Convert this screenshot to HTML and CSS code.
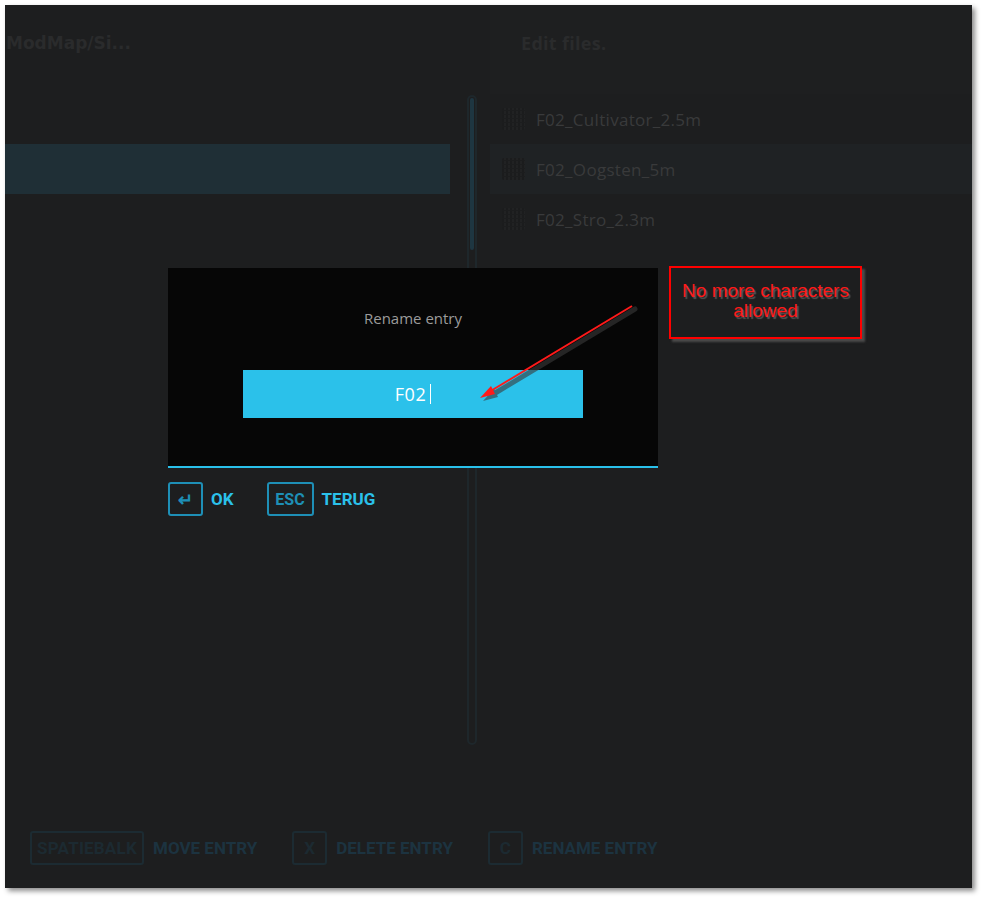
FILE: index.html
```html
<!DOCTYPE html>
<html>
<head>
<meta charset="utf-8">
<link rel="stylesheet" href="styles.css">
</head>
<body>
<div class="window">
  <div class="main">
    <div class="col-left">
      <div class="head head-left">ModMap/Si...</div>
      <div class="row"></div>
      <div class="row row-sel-left"></div>
    </div>
    <div class="col-scroll">
      <div class="track"><div class="thumb"></div></div>
    </div>
    <div class="col-right">
      <div class="head head-right">Edit files.</div>
      <div class="row frow"><span class="ficon"></span><span class="fname">F02_Cultivator_2.5m</span></div>
      <div class="row frow row-sel-right"><span class="ficon"></span><span class="fname">F02_Oogsten_5m</span></div>
      <div class="row frow"><span class="ficon"></span><span class="fname">F02_Stro_2.3m</span></div>
    </div>
  </div>
  <div class="bottombar">
    <div class="hint"><span class="key key-wide">SPATIEBALK</span><span class="hlabel">MOVE ENTRY</span></div>
    <div class="hint"><span class="key">X</span><span class="hlabel">DELETE ENTRY</span></div>
    <div class="hint"><span class="key">C</span><span class="hlabel">RENAME ENTRY</span></div>
  </div>

  <div class="dialog">
    <div class="dialog-box">
      <div class="dialog-title">Rename entry</div>
      <div class="dialog-input"><span class="value">F02</span><span class="caret"></span></div>
    </div>
    <div class="dialog-keys">
      <div class="dkey"><span class="dbox dbox-enter">&#8629;</span><span class="dlabel">OK</span></div>
      <div class="dkey"><span class="dbox dbox-esc">ESC</span><span class="dlabel">TERUG</span></div>
    </div>
  </div>

  <div class="note">No more characters allowed</div>
  <svg class="arrow" width="967" height="883" viewBox="0 0 967 883">
    <g transform="translate(3,3)" opacity="0.6">
      <line x1="627" y1="301" x2="484" y2="387" stroke="#3a3a3a" stroke-width="5" stroke-linecap="round"/>
      <polygon points="475,393 486,381 490,389" fill="#3a3a3a"/>
    </g>
    <line x1="627" y1="301" x2="484" y2="387" stroke="#ff1a1a" stroke-width="2"/>
    <polygon points="475,393 486,381 490,389" fill="#ff1a1a"/>
  </svg>
</div>
</body>
</html>
```
FILE: styles.css
```css
html, body {
  margin: 0;
  padding: 0;
  background: #ffffff;
}
body {
  width: 981px;
  height: 897px;
  overflow: hidden;
  font-family: "Open Sans", "Noto Sans", sans-serif;
}
.window {
  position: relative;
  margin: 5px 0 0 5px;
  width: 967px;
  height: 883px;
  background: #1d1e1f;
  box-shadow: 3px 3px 5px rgba(0, 0, 0, 0.45);
  overflow: hidden;
  display: flex;
  flex-direction: column;
}
.main {
  display: flex;
  height: 812px;
}
.col-left {
  width: 445px;
  overflow: hidden;
}
.col-scroll {
  width: 40px;
  padding-top: 90px;
}
.col-right {
  flex: 1;
}
.head {
  height: 89px;
  box-sizing: border-box;
  padding-top: 25px;
  font-weight: 700;
  font-size: 18px;
  line-height: 26px;
  color: #2a2b2c;
  white-space: nowrap;
}
.head-left {
  font-family: "DejaVu Sans", sans-serif;
  font-size: 17px;
  padding-left: 1px;
}
.head-right {
  padding-left: 31px;
  font-family: "Open Sans", sans-serif;
  font-size: 18px;
  letter-spacing: 0.3px;
  background: #1e1f20;
}
.row {
  height: 50px;
}
.row-sel-left {
  background: #1f2f36;
}
.frow {
  display: flex;
  align-items: center;
}
.row-sel-right {
  background: #1f2224;
}
.ficon {
  width: 23px;
  height: 22px;
  margin-left: 12px;
  background:
    repeating-linear-gradient(0deg, transparent 0 3px, #1c1d1e 3px 4px),
    repeating-linear-gradient(90deg, #1b1c1d 0 2px, #212223 2px 4px);
  border-radius: 2px;
}
.fname {
  margin-left: 11px;
  font-size: 17px;
  color: #393a3b;
  letter-spacing: 0.3px;
}
.track {
  margin-left: 17px;
  width: 10px;
  height: 650px;
  box-sizing: border-box;
  border: 2px solid #1e272b;
  border-radius: 5px;
  padding: 1px;
}
.thumb {
  width: 4px;
  height: 152px;
  border-radius: 2px;
  background: #1e3641;
}
.bottombar {
  display: flex;
  align-items: center;
  padding-left: 25px;
  height: 34px;
  margin-top: 14px;
}
.hint {
  display: flex;
  align-items: center;
  margin-right: 35px;
}
.key {
  box-sizing: border-box;
  height: 34px;
  min-width: 35px;
  padding: 0 6px;
  display: flex;
  align-items: center;
  justify-content: center;
  border: 2px solid #1c2b32;
  border-radius: 3px;
  font-family: "Roboto", sans-serif;
  font-weight: 700;
  font-size: 17px;
  color: #1c2a31;
}
.key-wide {
  width: 114px;
  font-size: 17px;
  letter-spacing: 0.2px;
}
.hlabel {
  margin-left: 9px;
  font-family: "Roboto", sans-serif;
  font-weight: 700;
  font-size: 17px;
  color: #1c3340;
}
.dialog {
  position: absolute;
  left: 163px;
  top: 263px;
  width: 490px;
}
.dialog-box {
  height: 198px;
  background: #060606;
  border-bottom: 2px solid #29c0ea;
  display: flex;
  flex-direction: column;
  align-items: center;
}
.dialog-title {
  margin-top: 40px;
  font-size: 15px;
  line-height: 20px;
  color: #9b9b9b;
}
.dialog-input {
  margin-top: 42px;
  width: 340px;
  height: 48px;
  background: #2bc1ea;
  display: flex;
  align-items: center;
  justify-content: center;
}
.value {
  font-size: 18px;
  color: #ffffff;
  letter-spacing: 0.5px;
}
.caret {
  width: 1px;
  height: 20px;
  margin-left: 4px;
  background: #ffffff;
}
.dialog-keys {
  display: flex;
  margin-top: 14px;
}
.dkey {
  display: flex;
  align-items: center;
  margin-right: 33px;
}
.dbox {
  box-sizing: border-box;
  height: 34px;
  display: flex;
  align-items: center;
  justify-content: center;
  border: 2px solid #1e8fb6;
  border-radius: 3px;
  font-family: "Roboto", sans-serif;
  font-weight: 700;
  color: #1e8fb6;
}
.dbox-enter {
  width: 35px;
  font-size: 18px;
}
.dbox-esc {
  width: 47px;
  font-size: 16px;
}
.dlabel {
  margin-left: 8px;
  font-family: "Roboto", sans-serif;
  font-weight: 700;
  font-size: 17px;
  color: #2bc1ea;
}
.note {
  position: absolute;
  left: 664px;
  top: 261px;
  width: 193px;
  height: 73px;
  box-sizing: border-box;
  border: 2px solid #ff0000;
  box-shadow: 3px 3px 2px #4a4a4a;
  display: flex;
  align-items: center;
  justify-content: center;
  text-align: center;
  padding: 0 6px 4px;
  font-family: "Liberation Sans", Arial, sans-serif;
  font-size: 19px;
  line-height: 20px;
  color: #ff1a1a;
  text-shadow: 2px 2px 1px #555555;
}
.arrow {
  position: absolute;
  left: 0;
  top: 0;
  pointer-events: none;
}
```
